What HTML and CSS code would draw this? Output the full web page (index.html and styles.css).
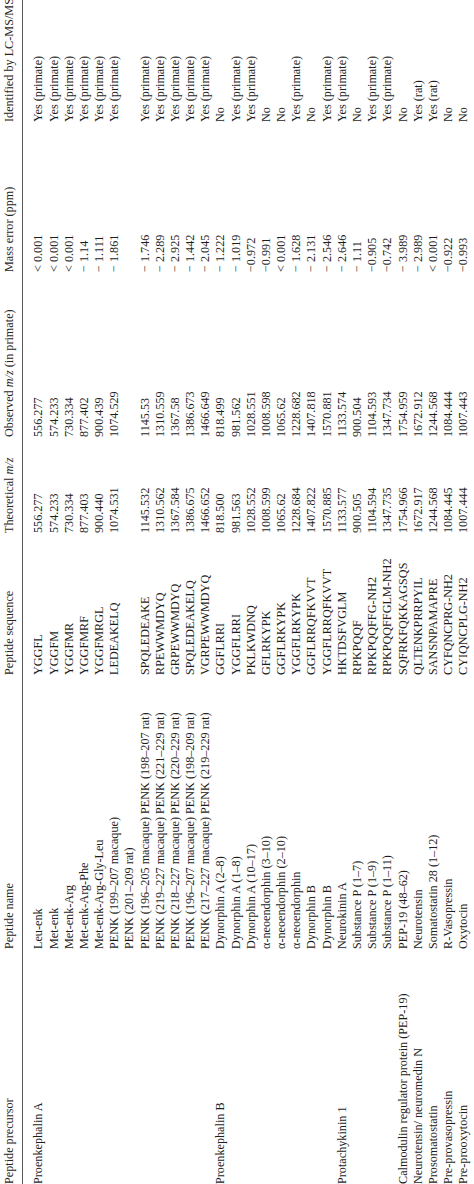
FILE: index.html
```html
<!DOCTYPE html>
<html lang="en">
<head>
<meta charset="utf-8">
<title>Peptides identified</title>
<link rel="stylesheet" href="styles.css">
</head>
<body>
<div class="page">
  <div class="table">
    <div class="th">Peptide precursor</div>
    <div class="th">Peptide name</div>
    <div class="th">Peptide sequence</div>
    <div class="th">Theoretical <i>m/z</i></div>
    <div class="th">Observed <i>m/z</i> (in primate)</div>
    <div class="th">Mass error (ppm)</div>
    <div class="th">Identified by LC-MS/MS</div>
    <div class="rule"></div>

    <div class="nm">Proenkephalin A</div><div class="nm">Leu-enk</div><div>YGGFL</div><div>556.277</div><div>556.277</div><div>&lt; 0.001</div><div>Yes (primate)</div>
    <div></div><div class="nm">Met-enk</div><div>YGGFM</div><div>574.233</div><div>574.233</div><div>&lt; 0.001</div><div>Yes (primate)</div>
    <div></div><div class="nm">Met-enk-Arg</div><div>YGGFMR</div><div>730.334</div><div>730.334</div><div>&lt; 0.001</div><div>Yes (primate)</div>
    <div></div><div class="nm">Met-enk-Arg-Phe</div><div>YGGFMRF</div><div>877.403</div><div>877.402</div><div>− 1.14</div><div>Yes (primate)</div>
    <div></div><div class="nm">Met-enk-Arg-Gly-Leu</div><div>YGGFMRGL</div><div>900.440</div><div>900.439</div><div>− 1.111</div><div>Yes (primate)</div>
    <div></div><div class="nm">PENK (199–207 macaque)</div><div>LEDEAKELQ</div><div>1074.531</div><div>1074.529</div><div>− 1.861</div><div>Yes (primate)</div>
    <div></div><div class="nm">PENK (201–209 rat)</div><div></div><div></div><div></div><div></div><div></div>
    <div></div><div class="nm">PENK (196–205 macaque) PENK (198–207 rat)</div><div>SPQLEDEAKE</div><div>1145.532</div><div>1145.53</div><div>− 1.746</div><div>Yes (primate)</div>
    <div></div><div class="nm">PENK (219–227 macaque) PENK (221–229 rat)</div><div>RPEWWMDYQ</div><div>1310.562</div><div>1310.559</div><div>− 2.289</div><div>Yes (primate)</div>
    <div></div><div class="nm">PENK (218–227 macaque) PENK (220–229 rat)</div><div>GRPEWWMDYQ</div><div>1367.584</div><div>1367.58</div><div>− 2.925</div><div>Yes (primate)</div>
    <div></div><div class="nm">PENK (196–207 macaque) PENK (198–209 rat)</div><div>SPQLEDEAKELQ</div><div>1386.675</div><div>1386.673</div><div>− 1.442</div><div>Yes (primate)</div>
    <div></div><div class="nm">PENK (217–227 macaque) PENK (219–229 rat)</div><div>VGRPEWWMDYQ</div><div>1466.652</div><div>1466.649</div><div>− 2.045</div><div>Yes (primate)</div>

    <div class="nm">Proenkephalin B</div><div class="nm">Dynorphin A (2–8)</div><div>GGFLRRI</div><div>818.500</div><div>818.499</div><div>− 1.222</div><div>No</div>
    <div></div><div class="nm">Dynorphin A (1–8)</div><div>YGGFLRRI</div><div>981.563</div><div>981.562</div><div>− 1.019</div><div>Yes (primate)</div>
    <div></div><div class="nm">Dynorphin A (10–17)</div><div>PKLKWDNQ</div><div>1028.552</div><div>1028.551</div><div>−0.972</div><div>Yes (primate)</div>
    <div></div><div class="nm">α-neoendorphin (3–10)</div><div>GFLRKYPK</div><div>1008.599</div><div>1008.598</div><div>−0.991</div><div>No</div>
    <div></div><div class="nm">α-neoendorphin (2–10)</div><div>GGFLRKYPK</div><div>1065.62</div><div>1065.62</div><div>&lt; 0.001</div><div>No</div>
    <div></div><div class="nm">α-neoendorphin</div><div>YGGFLRKYPK</div><div>1228.684</div><div>1228.682</div><div>− 1.628</div><div>Yes (primate)</div>
    <div></div><div class="nm">Dynorphin B</div><div>GGFLRRQFKVVT</div><div>1407.822</div><div>1407.818</div><div>− 2.131</div><div>No</div>
    <div></div><div class="nm">Dynorphin B</div><div>YGGFLRRQFKVVT</div><div>1570.885</div><div>1570.881</div><div>− 2.546</div><div>Yes (primate)</div>

    <div class="nm">Protachykinin 1</div><div class="nm">Neurokinin A</div><div>HKTDSFVGLM</div><div>1133.577</div><div>1133.574</div><div>− 2.646</div><div>Yes (primate)</div>
    <div></div><div class="nm">Substance P (1–7)</div><div>RPKPQQF</div><div>900.505</div><div>900.504</div><div>− 1.11</div><div>No</div>
    <div></div><div class="nm">Substance P (1–9)</div><div>RPKPQQFFG-NH2</div><div>1104.594</div><div>1104.593</div><div>−0.905</div><div>Yes (primate)</div>
    <div></div><div class="nm">Substance P (1–11)</div><div>RPKPQQFFGLM-NH2</div><div>1347.735</div><div>1347.734</div><div>−0.742</div><div>Yes (primate)</div>

    <div class="nm">Calmodulin regulator protein (PEP-19)</div><div class="nm">PEP-19 (48–62)</div><div>SQFRKFQKKAGSQS</div><div>1754.966</div><div>1754.959</div><div>− 3.989</div><div>No</div>
    <div class="nm">Neurotensin/ neuromedin N</div><div class="nm">Neurotensin</div><div>QLTENKPRRPYIL</div><div>1672.917</div><div>1672.912</div><div>− 2.989</div><div>Yes (rat)</div>
    <div class="nm">Prosomatostatin</div><div class="nm">Somatostatin 28 (1–12)</div><div>SANSNPAMAPRE</div><div>1244.568</div><div>1244.568</div><div>&lt; 0.001</div><div>Yes (rat)</div>
    <div class="nm">Pre-provasopressin</div><div class="nm">R-Vasopressin</div><div>CYFQNCPRG-NH2</div><div>1084.445</div><div>1084.444</div><div>−0.922</div><div>No</div>
    <div class="nm">Pre-prooxytocin</div><div class="nm">Oxytocin</div><div>CYIQNCPLG-NH2</div><div>1007.444</div><div>1007.443</div><div>−0.993</div><div>No</div>
  </div>
</div>
</body>
</html>
```

FILE: styles.css
```css
html, body {
  margin: 0;
  padding: 0;
  background: #ffffff;
  overflow: hidden;
}

.page {
  width: 474px;
  height: 1184px;
  overflow: hidden;
}

.table {
  width: 1184px;
  height: 474px;
  box-sizing: border-box;
  padding-top: 2.4px;
  transform-origin: 0 0;
  transform: translateY(1184px) rotate(-90deg);
  display: grid;
  grid-template-columns: 235px 274px 142px 96px 165px 150px 200px;
  grid-template-rows: 15.18px 13.82px;
  grid-auto-rows: 15.18px;
  font-family: "Liberation Serif", "Times New Roman", serif;
  font-size: 12.2px;
  line-height: 15.18px;
  color: #1d1d1d;
  white-space: nowrap;
}

.th {
  color: #262626;
}

.nm {
  font-family: "Liberation Serif", "Times New Roman", serif;
}

.rule {
  grid-column: 1 / -1;
  align-self: start;
  margin-top: 4.9px;
  border-top: 1.5px solid #5a5a5a;
}
```
